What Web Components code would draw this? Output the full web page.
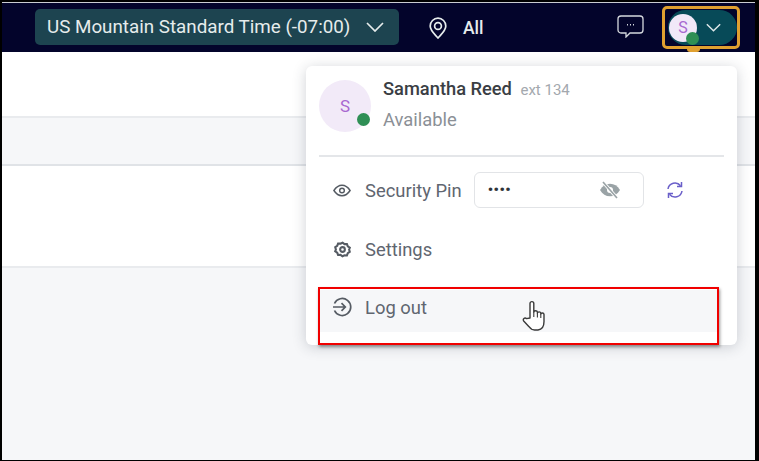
<!DOCTYPE html>
<html>
<head>
<meta charset="utf-8">
<title>User menu</title>
<style>
  html, body { margin: 0; height: 100%; background: #000; }
  body { font-family: Roboto, "Liberation Sans", sans-serif; }
</style>
</head>
<body>
<app-shell>
  <top-bar slot="bar"></top-bar>
  <page-band kind="white" size="64"></page-band>
  <page-band kind="gray" size="46"></page-band>
  <page-band kind="white" size="100"></page-band>
  <page-band kind="gray" size="fill"></page-band>
  <user-menu slot="over"></user-menu>
</app-shell>

<script>
const ICONS = {
    chevron: `<svg viewBox="0 0 18 10" width="18" height="10" fill="none" stroke="currentColor" stroke-width="1.7"><path d="M1 1l8 8 8-8"/></svg>`,
    pin: `<svg viewBox="0 0 18 22" width="18" height="22" fill="none" stroke="currentColor" stroke-width="1.7"><path d="M9 21C5 16.5 1.2 13.5 1.2 9a7.8 7.8 0 0 1 15.6 0C16.8 13.5 13 16.5 9 21z"/><circle cx="9" cy="9" r="3.4"/></svg>`,
    chat: `<svg viewBox="0 0 27 23" width="27" height="23" fill="none" stroke="currentColor" stroke-width="1.3"><path d="M4 1h19a3 3 0 0 1 3 3v11a3 3 0 0 1-3 3H13l-4 4v-4H4a3 3 0 0 1-3-3V4a3 3 0 0 1 3-3z"/><path d="M10 9.7h1M13 9.7h1M16 9.7h1" stroke-width="1.4"/></svg>`,
    eye: `<svg viewBox="0 0 20 14" width="18" height="13" fill="none" stroke="currentColor" stroke-width="1.6"><path d="M1 7c2.5-3.8 5.500-5.800 9-5.800S16.500 3.200 19 7c-2.500 3.800-5.500 5.800-9 5.800S3.500 10.800 1 7z"/><circle cx="10" cy="7" r="2.600"/></svg>`,
    eyeOff: `<svg viewBox="0 0 22 18" width="22" height="18"><path fill="currentColor" d="M1 9c2.500-4.200 5.800-6.300 10-6.300S18.500 4.800 21 9c-2.500 4.200-5.800 6.300-10 6.300S3.500 13.200 1 9z"/><circle cx="11" cy="9" r="3" fill="#fff"/><path d="M4 1l14 16" stroke="#fff" stroke-width="3.400"/><path d="M4 1l14 16" stroke="currentColor" stroke-width="1.700"/></svg>`,
    sync: `<svg viewBox="0 0 18 18" width="18" height="18" fill="none" stroke="currentColor" stroke-width="1.500"><path d="M2 8a7 7 0 0 1 12.500-3.200M16 10a7 7 0 0 1-12.500 3.200"/><path d="M15.500 1v4.500H11M2.500 17v-4.500H7"/></svg>`,
    gear: `<svg viewBox="0 0 18 18" width="17" height="17" fill="none" stroke="currentColor" stroke-width="2.2"><path d="M9 1.800l2.100 1.500 2.600-.1.900 2.400 2.100 1.500L16 9l.7 2.400-2.100 1.500-.9 2.400-2.600-.1L9 16.200l-2.100-1.500-2.600.1-.9-2.400-2.100-1.500L2 9l-.7-2.400 2.100-1.500.9-2.400 2.600.1z"/><circle cx="9" cy="9" r="2.500"/></svg>`,
    logout: `<svg viewBox="0 0 20 20" width="20" height="20" fill="none" stroke="currentColor" stroke-width="1.700"><path d="M2.500 6.500A8.500 8.500 0 1 1 2.500 13.500"/><path d="M1 10h12M9.500 6.200l3.800 3.800-3.800 3.800"/></svg>`,
    hand: `<svg viewBox="0 0 24 32" width="24" height="32"><path fill="#fff" stroke="#3a3a3a" stroke-width="1.400" stroke-linejoin="round" d="M8 18V3.500a1.900 1.900 0 0 1 3.800 0V12c.2-1.700 3.400-1.700 3.600 0v1c.2-1.500 3.200-1.500 3.400 0v1c.2-1.300 3-1.300 3.200.3v7.200c0 4-1.600 8-6 8.500h-3.500c-2.500 0-4-1.200-5.500-3.300L1.700 21c-1.200-1.700.9-3.900 2.800-2.400z"/><path fill="none" stroke="#3a3a3a" stroke-width="1.100" d="M11.800 12v5M15.400 13v4.500M18.800 14v4"/></svg>`
};

customElements.define("app-shell", class AppShell extends HTMLElement {
    constructor() {
	super();
	this.attachShadow({ mode: "open" }).innerHTML = `
<style>
  :host {
    display: block;
    box-sizing: border-box;
    height: 461px;
    padding: 2px 4px 2px 2px;
  }
  .screen {
    position: relative;
    height: 100%;
    display: flex;
    flex-direction: column;
    border-top: 1px solid #c9ccd2;
    overflow: hidden;
  }
</style>
<div class="screen">
  <slot name="bar"></slot>
  <slot></slot>
  <slot name="over"></slot>
</div>`;
    }
});

customElements.define("page-band", class PageBand extends HTMLElement {
    connectedCallback() {
	const kind = this.getAttribute("kind"),
	      size = this.getAttribute("size");
	this.attachShadow({ mode: "open" }).innerHTML = `
<style>
  :host {
    display: block;
    background: ${kind == "white" ? "#fff" : "#f6f7f9"};
    ${size == "fill" ? "flex: 1;" : `height: ${size}px; border-bottom: 2px solid ${kind == "white" ? "#e9ebee" : "#e0e3e7"};`}
  }
</style>`;
    }
});

customElements.define("tz-select", class TzSelect extends HTMLElement {
    constructor() {
	super();
	this.attachShadow({ mode: "open" }).innerHTML = `
<style>
  :host {
    display: flex;
    align-items: center;
    box-sizing: border-box;
    width: 364px;
    height: 36px;
    padding: 0 15px 0 12px;
    justify-content: space-between;
    background: #1d4450;
    border-radius: 5px;
    color: #e6ecec;
    font-size: 18.8px;
  }
  svg { display: block; }
</style>
<slot></slot>${ICONS.chevron}`;
    }
});

customElements.define("user-chip", class UserChip extends HTMLElement {
    constructor() {
	super();
	this.attachShadow({ mode: "open" }).innerHTML = `
<style>
  :host {
    position: relative;
    display: flex;
    align-items: center;
    box-sizing: border-box;
    width: 78px;
    height: 43px;
    padding-left: 4px;
    gap: 9px;
    border: 3px solid #e0a030;
    border-radius: 5px;
    background: #03042b;
    color: #dfe9ea;
  }
  .fill {
    position: absolute;
    inset: 1px 0 1px 3px;
    background: #074a58;
    border-radius: 18px;
  }
  .avatar {
    position: relative;
    width: 28px;
    height: 28px;
    border-radius: 50%;
    background: #f1e8f8;
    color: #a868d0;
    font-size: 16px;
    display: flex;
    align-items: center;
    justify-content: center;
  }
  .dot {
    position: absolute;
    right: -2px;
    bottom: -3px;
    width: 13px;
    height: 13px;
    border-radius: 50%;
    background: #2f8f55;
  }
  svg { position: relative; display: block; width: 15px; height: 9px; }
  .tail {
    position: absolute;
    left: 22px;
    bottom: -6px;
    width: 13px;
    height: 3px;
    background: #e0a030;
    border-radius: 0 0 4px 4px;
  }
</style>
<div class="fill"></div>
<div class="avatar">S<span class="dot"></span></div>
${ICONS.chevron}
<div class="tail"></div>`;
    }
});

customElements.define("top-bar", class TopBar extends HTMLElement {
    constructor() {
	super();
	this.attachShadow({ mode: "open" }).innerHTML = `
<style>
  :host {
    display: flex;
    align-items: center;
    box-sizing: border-box;
    height: 49px;
    padding-left: 33px;
    background: #03042b;
    color: #e6ecec;
    font-size: 17.5px;
  }
  svg { display: block; }
  .pin { margin-left: 30px; }
  .all { margin-left: 16px; font-weight: 500; }
  .chat { margin: -2px 0 0 auto; color: #d5d9de; }
  user-chip { margin: 0 15px 0 18px; }
  tz-select { margin-top: -1px; }
</style>
<tz-select>US Mountain Standard Time (-07:00)</tz-select>
<span class="pin">${ICONS.pin}</span>
<span class="all">All</span>
<span class="chat">${ICONS.chat}</span>
<user-chip></user-chip>`;
    }
});

customElements.define("menu-row", class MenuRow extends HTMLElement {
    connectedCallback() {
	this.attachShadow({ mode: "open" }).innerHTML = `
<style>
  :host {
    display: flex;
    align-items: center;
    box-sizing: border-box;
    height: 42px;
    padding-left: 13px;
    gap: 13px;
    color: #5f6670;
    font-size: 18.4px;
  }
  :host([hover]) {
    height: 46px;
    padding-bottom: 4px;
    margin-right: 7px;
    background: linear-gradient(#fff 0 4px, #f6f7f9 4px);
  }
  .icon { width: 20px; display: flex; justify-content: center; color: #555b63; }
  svg { display: block; }
</style>
<span class="icon">${ICONS[this.getAttribute("icon")]}</span>
<slot></slot>`;
    }
});

customElements.define("user-menu", class UserMenu extends HTMLElement {
    constructor() {
	super();
	this.attachShadow({ mode: "open" }).innerHTML = `
<style>
  :host {
    position: absolute;
    left: 304px;
    top: 63px;
    box-sizing: border-box;
    width: 431px;
    height: 279px;
    padding: 0 13px;
    background: #fff;
    border-radius: 6px;
    box-shadow: 0 2px 14px rgba(40, 50, 70, .22);
  }
  .head {
    display: flex;
    align-items: center;
    gap: 12px;
    height: 89px;
    border-bottom: 2px solid #e4e6e9;
    margin-bottom: 12px;
  }
  .avatar {
    position: relative;
    flex: none;
    width: 52px;
    height: 52px;
    border-radius: 50%;
    background: #f2eaf8;
    color: #a868d0;
    font-size: 17px;
    display: flex;
    align-items: center;
    justify-content: center;
    transform: translateY(-5px);
  }
  .dot {
    position: absolute;
    right: 1px;
    bottom: 6px;
    width: 13px;
    height: 13px;
    border-radius: 50%;
    background: #2f8f55;
  }
  .name { font-size: 18.3px; font-weight: 500; color: #3a3e44; line-height: 20px; white-space: nowrap; }
  .ext { font-size: 15px; font-weight: 400; color: #a3a8ae; margin-left: 4px; }
  .status { font-size: 18.4px; color: #8b9096; line-height: 20px; margin-top: 10px; }
  .who { transform: translateY(-6px); }
  .pin-row { margin-bottom: 17px; }
  .pin-box {
    display: flex;
    align-items: center;
    justify-content: space-between;
    box-sizing: border-box;
    width: 170px;
    height: 36px;
    padding: 0 22px 0 13px;
    border: 1px solid #e2e4e7;
    border-radius: 6px;
    color: #2f3338;
    font-size: 15px;
    font-weight: 700;
    letter-spacing: .5px;
  }
  .pin-box svg { display: block; color: #9aa3a6; }
  .sync { display: block; margin-left: 10px; color: #6a5fc9; }
  .sync svg { display: block; }
  .inline { display: flex; align-items: center; gap: 12px; }
  .settings { margin-bottom: 16px; }
  .red {
    position: absolute;
    left: 12px;
    top: 221px;
    box-sizing: border-box;
    width: 401px;
    height: 58px;
    border: 2px solid #f00000;
    box-shadow: 1px 2px 3px rgba(0, 0, 0, .4);
  }
  .hand { position: absolute; left: 216px; top: 234px; line-height: 0; }
</style>
<div class="head">
  <div class="avatar">S<span class="dot"></span></div>
  <div class="who">
    <div class="name">Samantha Reed <span class="ext">ext 134</span></div>
    <div class="status">Available</div>
  </div>
</div>
<menu-row class="pin-row" icon="eye">
  <span class="inline">Security Pin
    <span class="pin-box"><span>••••</span>${ICONS.eyeOff}</span>
    <span class="sync">${ICONS.sync}</span>
  </span>
</menu-row>
<menu-row class="settings" icon="gear">Settings</menu-row>
<menu-row hover icon="logout">Log out</menu-row>
<div class="red"></div>
<div class="hand">${ICONS.hand}</div>`;
    }
});
</script>
</body>
</html>
